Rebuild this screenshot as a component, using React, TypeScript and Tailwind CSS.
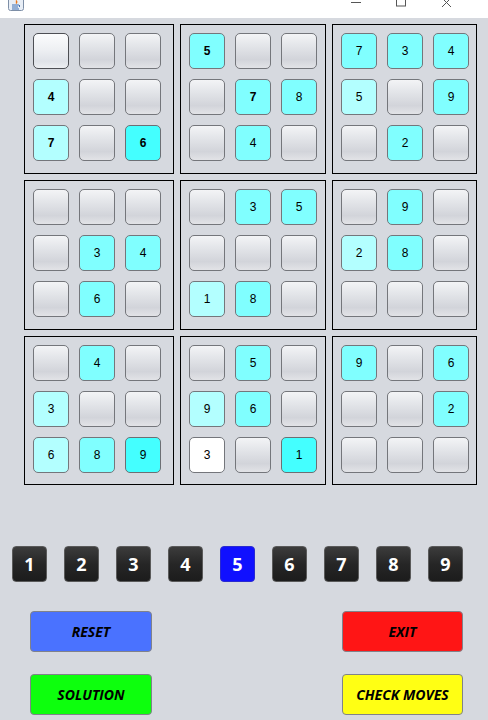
import React from 'react';

type Cell = { v: string; c: 'n' | 'L' | 'M' | 'B' | 'W' | 'F'; b?: boolean };

const e: Cell = { v: '', c: 'n' };
const L = (v: string, b = false): Cell => ({ v, c: 'L', b });
const M = (v: string, b = false): Cell => ({ v, c: 'M', b });
const B = (v: string, b = false): Cell => ({ v, c: 'B', b });

const boxes: Cell[][] = [
  [{ v: '', c: 'F' }, e, e, L('4', true), e, e, L('7', true), e, B('6', true)],
  [M('5', true), e, e, e, M('7', true), M('8'), e, M('4'), e],
  [M('7'), M('3'), M('4'), L('5'), e, M('9'), e, M('2'), e],
  [e, e, e, e, M('3'), M('4'), e, M('6'), e],
  [e, M('3'), M('5'), e, e, e, L('1'), M('8'), e],
  [e, M('9'), e, L('2'), M('8'), e, e, e, e],
  [e, M('4'), e, L('3'), e, e, L('6'), M('8'), B('9')],
  [e, M('5'), e, L('9'), M('6'), e, { v: '3', c: 'W' }, e, B('1')],
  [M('9'), e, M('6'), e, e, M('2'), e, e, e],
];

const cellBg: Record<Cell['c'], string> = {
  n: 'bg-[linear-gradient(to_bottom,#f3f4f6_0%,#e3e5e9_35%,#d2d4da_75%,#e2e3e7_100%)] border-[#74767b]',
  F: 'bg-[linear-gradient(to_bottom,#fbfcfd_0%,#eef0f3_45%,#dfe2e8_80%,#eceef1_100%)] border-[#4d4f54]',
  L: 'bg-[#b3ffff] border-[#74767b]',
  M: 'bg-[#80ffff] border-[#74767b]',
  B: 'bg-[#44ffff] border-[#6d6f74]',
  W: 'bg-white border-[#74767b]',
};

function Box({ cells, w, h }: { cells: Cell[]; w: string; h: string }) {
  return (
    <div className={`border border-black pl-[8px] pt-[8px] ${w} ${h}`}>
      <div className="grid grid-cols-[36px_36px_36px] grid-rows-[36px_36px_36px] gap-[10px]">
        {cells.map((c, i) => (
          <div
            key={i}
            className={`flex items-center justify-center rounded-[5px] border text-[12px] text-black ${cellBg[c.c]} ${c.b ? 'font-bold' : 'font-normal'}`}
          >
            {c.v}
          </div>
        ))}
      </div>
    </div>
  );
}

const widths = ['w-[150px]', 'w-[146px]', 'w-[145px]'];
const heights = ['h-[150px]', 'h-[150px]', 'h-[149px]'];

function BigButton({ label, color }: { label: string; color: string }) {
  return (
    <div
      className={`flex h-[41px] items-center justify-center rounded-[4px] border border-[#80828a] text-[14px] font-bold italic text-black ${color}`}
    >
      {label}
    </div>
  );
}

export default function App() {
  return (
    <div className="h-[720px] w-[488px] overflow-hidden bg-[#d6d9df] font-['Liberation_Sans',Arial,sans-serif]">
      {/* title bar */}
      <div className="flex h-[18px] items-start bg-white">
        <svg className="ml-[8px]" width="16" height="11" viewBox="0 0 16 11">
          <rect x="0.5" y="-2" width="15" height="12.5" rx="2" fill="#e8eef6" stroke="#7d8ea6" />
          <path d="M8 0.5 Q9.5 2 8 3.5" stroke="#e8761a" strokeWidth="1.4" fill="none" />
          <path d="M4 5h7M4 7h6M4 9h7" stroke="#3d6fb3" strokeWidth="1" />
          <path d="M11 5 q2 1 0 2" stroke="#3d6fb3" strokeWidth="1" fill="none" />
        </svg>
        <div className="flex-1" />
        <svg width="120" height="8" viewBox="0 0 120 8" className="mr-[17px]">
          <path d="M0 2.5h10" stroke="#555" strokeWidth="1" />
          <rect x="45.5" y="-3" width="9" height="9" fill="none" stroke="#555" />
          <path d="M91 -2 l9 9 M100 -2 l-9 9" stroke="#555" strokeWidth="1" />
        </svg>
      </div>

      {/* board */}
      <div className="ml-[24px] mt-[6px] grid grid-cols-[150px_146px_145px] gap-[6px]">
        {boxes.map((b, i) => (
          <Box key={i} cells={b} w={widths[i % 3]} h={heights[Math.floor(i / 3)]} />
        ))}
      </div>

      {/* number picker */}
      <div className="ml-[12px] mt-[61px] flex gap-[17px] font-['Open_Sans',sans-serif]">
        {['1', '2', '3', '4', '5', '6', '7', '8', '9'].map((n) => (
          <div
            key={n}
            className={`flex h-[36px] w-[35px] items-center justify-center rounded-[4px] border text-[18px] font-bold text-white ${
              n === '5'
                ? 'border-[#2a2ad0] bg-[#1010ff]'
                : 'border-[#5a5a5a] bg-[linear-gradient(to_bottom,#3c3c3c_0%,#262626_50%,#1c1c1c_100%)]'
            }`}
          >
            {n}
          </div>
        ))}
      </div>

      {/* actions */}
      <div className="ml-[30px] mr-[25px] mt-[29px] grid grid-cols-[122px_121px] justify-between gap-y-[22px] font-['Open_Sans',sans-serif]">
        <BigButton label="RESET" color="bg-[#4a72ff]" />
        <BigButton label="EXIT" color="bg-[#ff1515]" />
        <BigButton label="SOLUTION" color="bg-[#0dff0d]" />
        <BigButton label="CHECK MOVES" color="bg-[#ffff14]" />
      </div>
    </div>
  );
}
